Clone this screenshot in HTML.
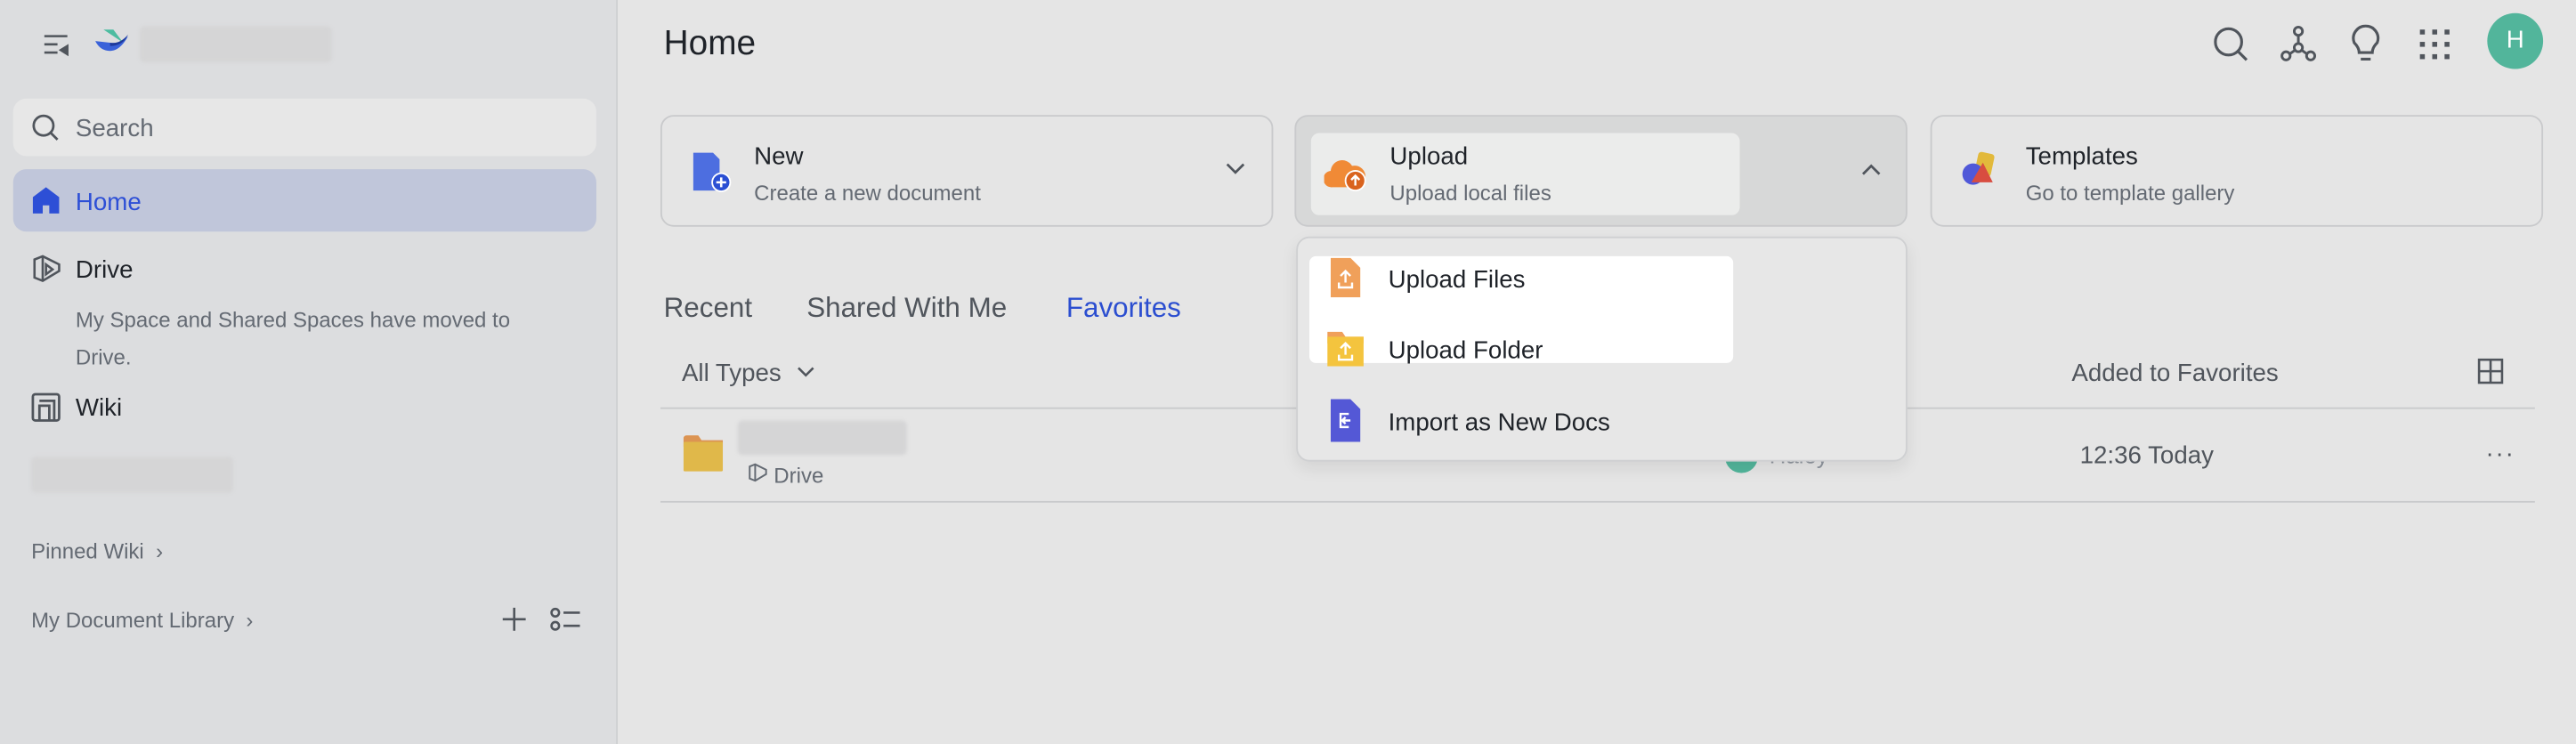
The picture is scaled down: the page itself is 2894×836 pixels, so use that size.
<!DOCTYPE html>
<html><head><meta charset="utf-8"><style>
*{box-sizing:border-box;margin:0;padding:0}
html,body{width:2894px;height:836px;overflow:hidden;background:#e5e5e5}
#r{width:1568px;height:453px;transform:scale(1.84566);transform-origin:0 0;position:relative;font-family:"Liberation Sans",sans-serif;color:#1f2329;background:#e5e5e5}
.a{position:absolute;white-space:nowrap}
.blur{position:absolute;background:#d5d5d6;border-radius:3px;filter:blur(1px)}
.card{position:absolute;top:70px;height:68px;border:1px solid #c9cacc;border-radius:8px}
.t{font-size:15px;color:#1f2329}
.s{font-size:13px;color:#646a73}
</style></head><body><div id="r">
<div class="a" style="left:0;top:0;width:376px;height:453px;background:#dcdddf;border-right:1px solid #cfd0d2"></div>
<svg class="a" style="left:26px;top:20px" width="16" height="15" viewBox="0 0 16 15" fill="none" stroke="#50555c" stroke-width="1.4"><path d="M1 2h14M1 7h8M1 12h8"/><path d="M15 8l-4 2.5 4 2.5z" fill="#50555c"/></svg>
<svg class="a" style="left:58px;top:17px" width="22" height="18" viewBox="0 0 22 18"><path d="M5 1h6l6 8z" fill="#4cbca0"/><path d="M0 8q3 6 9 6 6 0 11-9-5 5-11 4z" fill="#3a62d9"/><path d="M9 9q6 1 11-5-3 7-11 7z" fill="#1e3a9c"/></svg>
<div class="blur" style="left:85px;top:16px;width:117px;height:22px"></div>
<div class="a" style="left:8px;top:60px;width:355px;height:35px;background:#e7e7e7;border-radius:8px"></div>
<svg class="a" style="left:19px;top:69px" width="17" height="17" viewBox="0 0 17 17" fill="none" stroke="#50555c" stroke-width="1.5"><circle cx="7.5" cy="7.5" r="6"/><path d="M12 12l4 4"/></svg>
<div class="a" style="left:46px;top:70px;font-size:15px;color:#646a73">Search</div>
<div class="a" style="left:8px;top:103px;width:355px;height:38px;background:#c0c6da;border-radius:8px"></div>
<svg class="a" style="left:19px;top:113px" width="18" height="18" viewBox="0 0 18 18"><path d="M1 7L9 1l8 6v10h-6v-5H7v5H1z" fill="#2d4fd6"/></svg>
<div class="a" style="left:46px;top:115px;font-size:15px;color:#2d4fd6">Home</div>
<svg class="a" style="left:19px;top:155px" width="18" height="18" viewBox="0 0 18 18" fill="none" stroke="#50555c" stroke-width="1.4"><path d="M2 3l5-2 10 5v4L7 16l-5-2z"/><path d="M7 1v15M9 6l4 3-4 3z"/></svg>
<div class="a" style="left:46px;top:156px;font-size:15px">Drive</div>
<div class="a s" style="left:46px;top:183px;line-height:23px">My Space and Shared Spaces have moved to<br>Drive.</div>
<svg class="a" style="left:19px;top:239px" width="18" height="18" viewBox="0 0 18 18" fill="none" stroke="#50555c" stroke-width="1.5"><rect x="1" y="1" width="16" height="16" rx="1.5"/><path d="M5 17V8h6v9M5 5h9v12"/></svg>
<div class="a" style="left:46px;top:240px;font-size:15px">Wiki</div>
<div class="blur" style="left:19px;top:278px;width:123px;height:22px"></div>
<div class="a s" style="left:19px;top:328px">Pinned Wiki &nbsp;›</div>
<div class="a s" style="left:19px;top:370px">My Document Library &nbsp;›</div>
<svg class="a" style="left:304px;top:369px" width="18" height="16" viewBox="0 0 18 16" fill="none" stroke="#50555c" stroke-width="1.4"><path d="M9 1v14M2 8h14"/></svg>
<svg class="a" style="left:334px;top:369px" width="20" height="16" viewBox="0 0 20 16" fill="none" stroke="#50555c" stroke-width="1.4"><circle cx="4" cy="4" r="2.3"/><circle cx="4" cy="12" r="2.3"/><path d="M9 4h10M9 12h10"/></svg>
<div class="a" style="left:404px;top:15px;font-size:21px">Home</div>
<svg class="a" style="left:1347px;top:16px" width="22" height="22" viewBox="0 0 22 22" fill="none" stroke="#50555c" stroke-width="1.7"><circle cx="9.5" cy="9.5" r="8"/><path d="M15.5 15.5l5 5"/></svg>
<svg class="a" style="left:1388px;top:15px" width="22" height="23" viewBox="0 0 22 23" fill="none" stroke="#50555c" stroke-width="1.6"><circle cx="11" cy="4" r="2.5"/><circle cx="11" cy="14" r="2.5"/><circle cx="3.5" cy="19" r="2.5"/><circle cx="18.5" cy="19" r="2.5"/><path d="M11 6.5v5M9 15.5l-3.5 2.5M13 15.5l3.5 2.5"/></svg>
<svg class="a" style="left:1430px;top:15px" width="20" height="24" viewBox="0 0 20 24" fill="none" stroke="#50555c" stroke-width="1.7"><path d="M6 17q0-3-3-6a7.5 7.5 0 1 1 14 0q-3 3-3 6z"/><path d="M7 21h6"/></svg>
<svg class="a" style="left:1472px;top:17px" width="20" height="20" viewBox="0 0 20 20" fill="#50555c"><rect x="1" y="1" width="3" height="3"/><rect x="8.5" y="1" width="3" height="3"/><rect x="16" y="1" width="3" height="3"/><rect x="1" y="8.5" width="3" height="3"/><rect x="8.5" y="8.5" width="3" height="3"/><rect x="16" y="8.5" width="3" height="3"/><rect x="1" y="16" width="3" height="3"/><rect x="8.5" y="16" width="3" height="3"/><rect x="16" y="16" width="3" height="3"/></svg>
<div class="a" style="left:1514px;top:8px;width:34px;height:34px;border-radius:50%;background:#52b59b;color:#fff;font-size:15px;text-align:center;line-height:34px">H</div>
<div class="card" style="left:402px;width:373px"></div>
<svg class="a" style="left:421px;top:92px" width="26" height="26" viewBox="0 0 26 26"><path d="M1 1h12l4 4v19H1z" fill="#4d6ee0"/><circle cx="18" cy="19" r="6" fill="#fff"/><circle cx="18" cy="19" r="5" fill="#2a4fd3"/><path d="M18 16v6M15 19h6" stroke="#fff" stroke-width="1.4"/></svg>
<div class="a t" style="left:459px;top:87px">New</div>
<div class="a s" style="left:459px;top:110px">Create a new document</div>
<svg class="a" style="left:746px;top:99px" width="12" height="8" viewBox="0 0 12 8" fill="none" stroke="#50555c" stroke-width="1.5"><path d="M1 1l5 5 5-5"/></svg>
<div class="card" style="left:788px;width:373px;background:#d7d8d8"></div>
<div class="a" style="left:798px;top:81px;width:261px;height:50px;background:#ebeceb;border-radius:5px"></div>
<svg class="a" style="left:806px;top:92px" width="28" height="26" viewBox="0 0 28 26"><path d="M5 22a5 5 0 0 1-1-10 7 7 0 0 1 13-3 6 6 0 0 1 3 13z" fill="#f08a36"/><circle cx="19" cy="18" r="6.5" fill="#fff"/><circle cx="19" cy="18" r="5.5" fill="#d9631e"/><path d="M19 21v-6M16.5 17.5L19 15l2.5 2.5" stroke="#fff" stroke-width="1.3" fill="none"/></svg>
<div class="a t" style="left:846px;top:87px">Upload</div>
<div class="a s" style="left:846px;top:110px">Upload local files</div>
<svg class="a" style="left:1133px;top:99px" width="12" height="8" viewBox="0 0 12 8" fill="none" stroke="#50555c" stroke-width="1.5"><path d="M1 7l5-5 5 5"/></svg>
<div class="card" style="left:1175px;width:373px"></div>
<svg class="a" style="left:1192px;top:91px" width="30" height="28" viewBox="0 0 30 28"><rect x="11" y="2" width="10" height="14" rx="2" transform="rotate(12 16 9)" fill="#e2b93b"/><circle cx="9" cy="15" r="6.5" fill="#5058d8"/><path d="M15 8l6 12H8z" fill="#d84d40"/></svg>
<div class="a t" style="left:1233px;top:87px">Templates</div>
<div class="a s" style="left:1233px;top:110px">Go to template gallery</div>
<div class="a" style="left:404px;top:178px;font-size:17px;color:#50555c">Recent</div>
<div class="a" style="left:491px;top:178px;font-size:17px;color:#50555c">Shared With Me</div>
<div class="a" style="left:649px;top:178px;font-size:17px;color:#2b4ed0">Favorites</div>
<div class="a" style="left:415px;top:219px;font-size:15px;color:#50555c">All Types</div>
<svg class="a" style="left:485px;top:223px" width="11" height="7" viewBox="0 0 11 7" fill="none" stroke="#50555c" stroke-width="1.4"><path d="M1 1l4.5 4.5L10 1"/></svg>
<div class="a" style="left:1261px;top:219px;font-size:15px;color:#50555c">Added to Favorites</div>
<svg class="a" style="left:1508px;top:218px" width="16" height="16" viewBox="0 0 16 16" fill="none" stroke="#50555c" stroke-width="1.4"><rect x="1" y="1" width="14" height="14"/><path d="M8 1v14M1 8h14"/></svg>
<div class="a" style="left:402px;top:248px;width:1141px;height:1px;background:#c9cacc"></div>
<div class="a" style="left:402px;top:305px;width:1141px;height:1px;background:#c9cacc"></div>
<svg class="a" style="left:416px;top:265px" width="24" height="22" viewBox="0 0 24 22"><path d="M0 2a2 2 0 0 1 2-2h7l2 3h13v4H0z" fill="#dc9452"/><rect x="0" y="4" width="24" height="18" rx="1" fill="#e0b84a"/></svg>
<div class="blur" style="left:449px;top:256px;width:103px;height:21px"></div>
<svg class="a" style="left:455px;top:282px" width="12" height="12" viewBox="0 0 18 18" fill="none" stroke="#646a73" stroke-width="1.6"><path d="M2 3l5-2 10 5v4L7 16l-5-2z"/><path d="M7 1v15"/></svg>
<div class="a s" style="left:471px;top:282px">Drive</div>
<div class="a" style="left:1050px;top:268px;width:20px;height:20px;border-radius:50%;background:#52b59b"></div>
<div class="a" style="left:1077px;top:269px;font-size:14px;color:#8f959e">Haley</div>
<div class="a" style="left:1266px;top:269px;font-size:15px;color:#50555c">12:36 Today</div>
<div class="a" style="left:1513px;top:268px;font-size:15px;color:#50555c;letter-spacing:1px">···</div>
<div class="a" style="left:789px;top:144px;width:372px;height:137px;background:#e7e7e7;border:1px solid #cfd0d2;border-radius:8px;box-shadow:0 4px 10px rgba(0,0,0,.08)"></div>
<div class="a" style="left:797px;top:156px;width:258px;height:65px;background:#fff;border-radius:4px"></div>
<svg class="a" style="left:808px;top:157px" width="22" height="24" viewBox="0 0 22 24"><path d="M2 0h12l6 6v18H2z" fill="#f0a05a"/><path d="M11 15V8M8 11l3-3 3 3M7 15v3h8v-3" stroke="#fff" stroke-width="1.3" fill="none"/></svg>
<div class="a t" style="left:845px;top:162px">Upload Files</div>
<svg class="a" style="left:807px;top:201px" width="24" height="22" viewBox="0 0 24 22"><path d="M1 1h9l2 3h11v4H1z" fill="#f0a05a"/><rect x="1" y="4" width="22" height="18" fill="#f4c43e"/><path d="M12 15V8M9 11l3-3 3 3M8 15v3h8v-3" stroke="#fff" stroke-width="1.3" fill="none"/></svg>
<div class="a t" style="left:845px;top:205px">Upload Folder</div>
<svg class="a" style="left:808px;top:243px" width="22" height="26" viewBox="0 0 22 26"><path d="M2 0h12l6 6v20H2z" fill="#5458d6"/><path d="M13 9H8v8h5M14 13H9M11 11l-2 2 2 2" stroke="#fff" stroke-width="1.3" fill="none"/></svg>
<div class="a t" style="left:845px;top:249px">Import as New Docs</div>
</div></body></html>
